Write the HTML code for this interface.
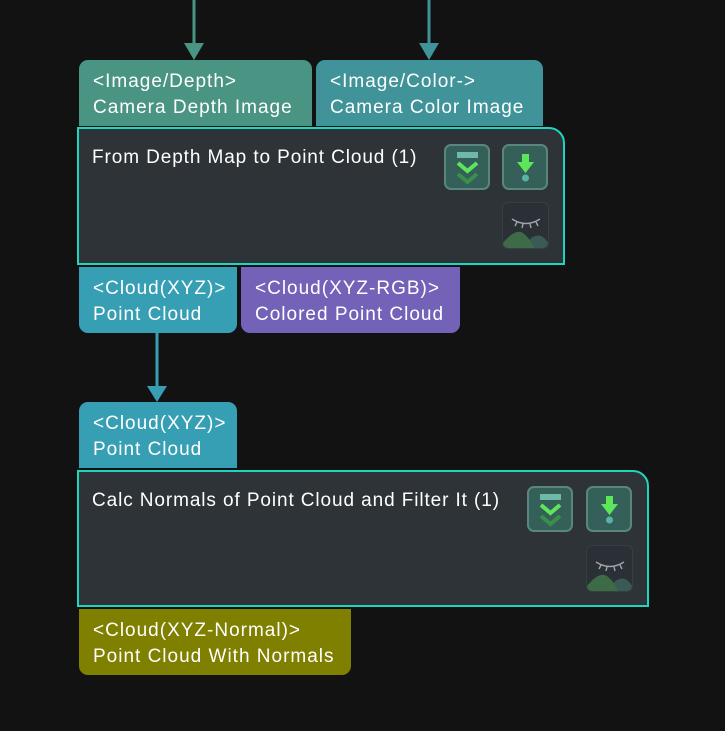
<!DOCTYPE html>
<html><head><style>
body{margin:0;width:725px;height:731px;background:#121212;position:relative;overflow:hidden;font-family:"Liberation Sans",sans-serif;}
.p{position:absolute;color:#fff;font-size:19px;line-height:26px;padding:9px 0 0 14px;box-sizing:border-box;letter-spacing:1px;white-space:nowrap}
.top{border-radius:9px 9px 0 0}
.bot{border-radius:0 0 9px 9px}
.n{position:absolute;background:#2e3338;border:2px solid #1ed6bd;border-radius:0 16px 0 0;box-sizing:border-box;color:#fff;font-size:19px;letter-spacing:0.9px}
.n .t{position:absolute;left:13px;top:18px;white-space:nowrap}
.b{position:absolute;width:46px;height:46px;box-sizing:border-box;border-radius:7px;background:#356059;border:2px solid #5a8680}
.im{position:absolute;width:47px;height:47px;box-sizing:border-box;border-radius:6px;background:#2a3035;border:1px solid #383e44;overflow:hidden}
</style></head><body>
<svg width="725" height="731" style="position:absolute;left:0;top:0">
<line x1="194" y1="0" x2="194" y2="46" stroke="#4a9484" stroke-width="3"/>
<polygon points="184,43 204,43 194,60" fill="#4a9484"/>
<line x1="429" y1="0" x2="429" y2="46" stroke="#3f9399" stroke-width="3"/>
<polygon points="419,43 439,43 429,60" fill="#3f9399"/>
<line x1="157" y1="333" x2="157" y2="390" stroke="#379fb4" stroke-width="3"/>
<polygon points="147,386 167,386 157,402" fill="#379fb4"/>
</svg>
<div class="p top" style="left:79px;top:60px;width:233px;height:66px;background:#4a9484">&lt;Image/Depth&gt;<br>Camera Depth Image</div>
<div class="p top" style="left:316px;top:60px;width:227px;height:66px;background:#3f9399">&lt;Image/Color-&gt;<br>Camera Color Image</div>
<div class="n" style="left:77px;top:127px;width:488px;height:138px"><div class="t">From Depth Map to Point Cloud (1)</div></div>
<div class="p bot" style="left:79px;top:267px;width:158px;height:66px;background:#379fb4">&lt;Cloud(XYZ)&gt;<br>Point Cloud</div>
<div class="p bot" style="left:241px;top:267px;width:219px;height:66px;background:#7461b8">&lt;Cloud(XYZ-RGB)&gt;<br>Colored Point Cloud</div>
<div class="p top" style="left:79px;top:402px;width:158px;height:66px;background:#379fb4">&lt;Cloud(XYZ)&gt;<br>Point Cloud</div>
<div class="n" style="left:77px;top:470px;width:572px;height:137px"><div class="t">Calc Normals of Point Cloud and Filter It (1)</div></div>
<div class="p bot" style="left:79px;top:609px;width:272px;height:66px;background:#7f7f00">&lt;Cloud(XYZ-Normal)&gt;<br>Point Cloud With Normals</div>

<div class="b" style="left:444px;top:144px"><svg width="42" height="42"><rect x="11" y="6" width="21" height="6" fill="#6fb9a9"/><polyline points="12,17 21.5,25 31,17" fill="none" stroke="#5ee65a" stroke-width="4"/><polyline points="12,28 21.5,36 31,28" fill="none" stroke="#3b8f4a" stroke-width="4"/></svg></div>
<div class="b" style="left:502px;top:144px"><svg width="42" height="42"><polygon points="18,8 25,8 25,16 30,16 21.5,27 13,16 18,16" fill="#5ee65a"/><circle cx="21.5" cy="32" r="3.5" fill="#59b3a3"/></svg></div>
<div class="im" style="left:502px;top:202px"><svg width="47" height="47"><path d="M9 16 Q23 25 37 16" fill="none" stroke="#a0a6ac" stroke-width="1.4"/><path d="M14 19l-2 4M20 21l-1 4M27 21l1 4M33 19l2 4" stroke="#a0a6ac" stroke-width="1.4"/><path d="M20 47 Q28 30 38 33 Q44 36 47 44 V47Z" fill="#3b5a55"/><path d="M0 47 V40 Q12 25 20 30 Q28 36 32 47Z" fill="#3d6b48"/></svg></div>
<div class="b" style="left:527px;top:486px"><svg width="42" height="42"><rect x="11" y="6" width="21" height="6" fill="#6fb9a9"/><polyline points="12,17 21.5,25 31,17" fill="none" stroke="#5ee65a" stroke-width="4"/><polyline points="12,28 21.5,36 31,28" fill="none" stroke="#3b8f4a" stroke-width="4"/></svg></div>
<div class="b" style="left:586px;top:486px"><svg width="42" height="42"><polygon points="18,8 25,8 25,16 30,16 21.5,27 13,16 18,16" fill="#5ee65a"/><circle cx="21.5" cy="32" r="3.5" fill="#59b3a3"/></svg></div>
<div class="im" style="left:586px;top:545px"><svg width="47" height="47"><path d="M9 16 Q23 25 37 16" fill="none" stroke="#a0a6ac" stroke-width="1.4"/><path d="M14 19l-2 4M20 21l-1 4M27 21l1 4M33 19l2 4" stroke="#a0a6ac" stroke-width="1.4"/><path d="M20 47 Q28 30 38 33 Q44 36 47 44 V47Z" fill="#3b5a55"/><path d="M0 47 V40 Q12 25 20 30 Q28 36 32 47Z" fill="#3d6b48"/></svg></div>
</body></html>
